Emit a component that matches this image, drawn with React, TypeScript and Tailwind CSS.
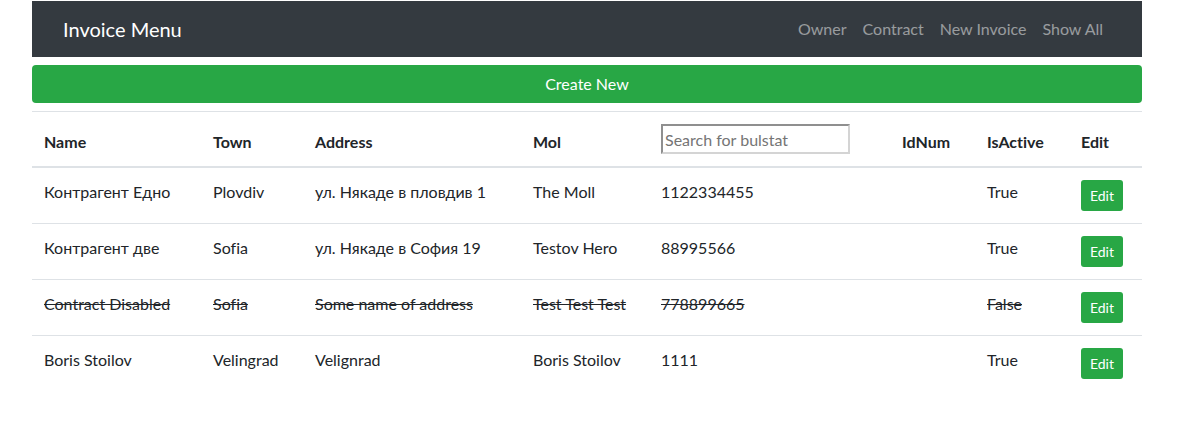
import React from 'react';

interface Contractor {
  name: string;
  town: string;
  address: string;
  mol: string;
  bulstat: string;
  idNum: string;
  isActive: boolean;
}

const contractors: Contractor[] = [
  { name: 'Контрагент Едно', town: 'Plovdiv', address: 'ул. Някаде в пловдив 1', mol: 'The Moll', bulstat: '1122334455', idNum: '', isActive: true },
  { name: 'Контрагент две', town: 'Sofia', address: 'ул. Някаде в София 19', mol: 'Testov Hero', bulstat: '88995566', idNum: '', isActive: true },
  { name: 'Contract Disabled', town: 'Sofia', address: 'Some name of address', mol: 'Test Test Test', bulstat: '778899665', idNum: '', isActive: false },
  { name: 'Boris Stoilov', town: 'Velingrad', address: 'Velignrad', mol: 'Boris Stoilov', bulstat: '1111', idNum: '', isActive: true },
];

const navLinks = ['Owner', 'Contract', 'New Invoice', 'Show All'];

const App: React.FC = () => {
  return (
    <div className="min-h-screen bg-white font-['Lato',sans-serif] text-[#212529] [font-variant-ligatures:none]">
      <div className="ml-8 w-[1110px] pt-px">
        {/* Navbar */}
        <nav className="flex h-[56px] items-center justify-between bg-[#343a40] px-[31px]">
          <span className="text-[20px] leading-[30px] text-white">Invoice Menu</span>
          <ul className="flex">
            {navLinks.map((link) => (
              <li key={link} className="px-2 text-[16px] leading-6 text-white/50">
                {link}
              </li>
            ))}
          </ul>
        </nav>

        {/* Create button */}
        <button className="mt-2 block h-[38px] w-full rounded bg-[#28a745] text-[16px] leading-6 text-white">
          Create New
        </button>

        {/* Table */}
        <table className="mt-2 w-full table-fixed border-collapse text-[16px] leading-6">
          <thead>
            <tr className="border-t border-b-2 border-t-[#dee2e6] border-b-[#dee2e6]">
              <th className="w-[169px] p-3 text-left align-bottom font-bold">Name</th>
              <th className="w-[102px] p-3 text-left align-bottom font-bold">Town</th>
              <th className="w-[218px] p-3 text-left align-bottom font-bold">Address</th>
              <th className="w-[128px] p-3 text-left align-bottom font-bold">Mol</th>
              <th className="w-[241px] p-3 text-left align-bottom font-normal">
                <input
                  type="text"
                  placeholder="Search for bulstat"
                  className="block h-[30px] w-[189px] border-2 border-t-[#8f8f8f] border-l-[#8f8f8f] border-b-[#d4d4d4] border-r-[#d4d4d4] px-[2px] text-[16px] placeholder:text-[#757575]"
                />
              </th>
              <th className="w-[85px] p-3 text-left align-bottom font-bold">IdNum</th>
              <th className="w-[94px] p-3 text-left align-bottom font-bold">IsActive</th>
              <th className="w-[73px] p-3 text-left align-bottom font-bold">Edit</th>
            </tr>
          </thead>
          <tbody>
            {contractors.map((c, i) => {
              const cell = c.isActive ? 'p-3 align-top' : 'p-3 align-top line-through';
              return (
                <tr key={i} className={i === 0 ? '' : 'border-t border-[#dee2e6]'}>
                  <td className={cell}>{c.name}</td>
                  <td className={cell}>{c.town}</td>
                  <td className={cell}>{c.address}</td>
                  <td className={cell}>{c.mol}</td>
                  <td className={cell}>{c.bulstat}</td>
                  <td className={cell}>{c.idNum}</td>
                  <td className={cell}>{c.isActive ? 'True' : 'False'}</td>
                  <td className="p-3 align-top">
                    <button className="h-[31px] w-[42px] rounded-[3px] bg-[#28a745] text-[14px] leading-[21px] text-white">
                      Edit
                    </button>
                  </td>
                </tr>
              );
            })}
          </tbody>
        </table>
      </div>
    </div>
  );
};

export default App;
